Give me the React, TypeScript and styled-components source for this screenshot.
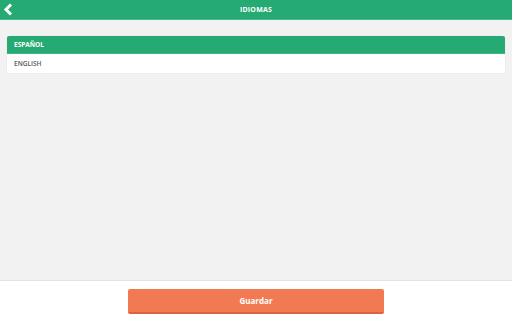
import styled, { createGlobalStyle } from "styled-components";

const GlobalStyle = createGlobalStyle`
  html, body {
    margin: 0;
    padding: 0;
    height: 100%;
  }
  body {
    font-family: "Open Sans", "Liberation Sans", sans-serif;
    background: #f2f2f2;
  }
  #root {
    height: 100%;
  }
`;

const Screen = styled.div`
  display: flex;
  flex-direction: column;
  height: 320px;
  width: 512px;
`;

const Header = styled.header`
  position: relative;
  display: flex;
  align-items: center;
  justify-content: center;
  height: 19px;
  background: #26aa74;
  border-bottom: 1px solid #4cbb8c;
`;

const BackButton = styled.button`
  position: absolute;
  left: 3px;
  top: 3px;
  padding: 0;
  border: 0;
  background: none;
  display: flex;
`;

const Title = styled.h1`
  margin: 0;
  color: #fff;
  font-size: 7px;
  font-weight: 700;
  letter-spacing: 0.2px;
`;

const Content = styled.main`
  flex: 1;
  padding: 16px 7px 0 7px;
`;

const List = styled.ul`
  list-style: none;
  margin: 0;
  padding: 0;
  background: #fff;
  border-radius: 2px;
  box-shadow: 0 0 1px rgba(0, 0, 0, 0.2);
  overflow: hidden;
`;

const Item = styled.li<{ $active?: boolean }>`
  display: flex;
  align-items: center;
  height: ${(p) => (p.$active ? "17px" : "19px")};
  padding: 0 7px;
  font-size: 6.5px;
  font-weight: ${(p) => (p.$active ? 700 : 600)};
  color: ${(p) => (p.$active ? "#fff" : "#555")};
  background: ${(p) => (p.$active ? "#26aa74" : "#fff")};
  border-bottom: ${(p) => (p.$active ? "1px solid #3fb585" : "none")};
`;

const Footer = styled.footer`
  display: flex;
  justify-content: center;
  align-items: flex-start;
  height: 40px;
  padding-top: 8px;
  box-sizing: border-box;
  background: #fff;
  border-top: 1px solid #e4e4e4;
`;

const SaveButton = styled.button`
  width: 256px;
  height: 25px;
  border: 0;
  border-radius: 2px;
  background: #f27a52;
  border-bottom: 2px solid #d9643f;
  color: #fff;
  font-family: inherit;
  font-size: 8px;
  font-weight: 700;
`;

export default function App() {
  return (
    <Screen>
      <GlobalStyle />
      <Header>
        <BackButton aria-label="Volver">
          <svg width="10" height="13" viewBox="0 0 10 13">
            <path d="M8 1.5 L3 6.5 L8 11.5" stroke="#fff" strokeWidth="3" fill="none" />
          </svg>
        </BackButton>
        <Title>IDIOMAS</Title>
      </Header>
      <Content>
        <List>
          <Item $active>ESPAÑOL</Item>
          <Item>ENGLISH</Item>
        </List>
      </Content>
      <Footer>
        <SaveButton>Guardar</SaveButton>
      </Footer>
    </Screen>
  );
}
